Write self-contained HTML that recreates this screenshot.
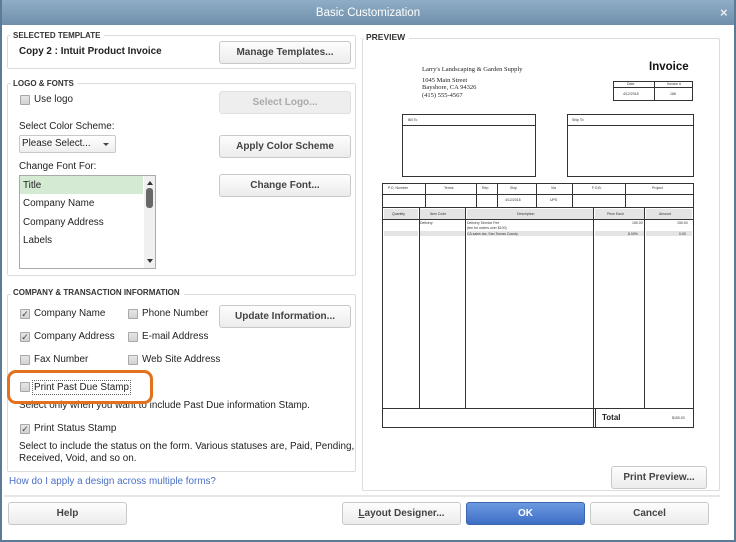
<!DOCTYPE html>
<html><head><style>
*{box-sizing:border-box;margin:0;padding:0}
body{width:736px;height:542px;overflow:hidden;background:#fff;font-family:"Liberation Sans",Arial,sans-serif;font-size:10px;color:#222;position:relative}
.a{position:absolute}
.win{left:0;top:0;width:736px;height:542px;border:2px solid #5d7b96;border-top:none}
.title{left:0;top:0;width:736px;height:25px;background:linear-gradient(#90adc6,#6f8fab);color:#fff;font-size:11.5px;text-align:center;line-height:26px}
.grp{border:1px solid #dcdcdc;border-radius:2px}
.lg{font-size:8px;font-weight:bold;color:#333;background:#fff;padding:0 4px 0 2px}
.btn{border:1px solid #c8c8c8;border-radius:3px;background:linear-gradient(#fdfdfd,#ececec);text-align:center;font-weight:bold;color:#444;font-size:10px}
.cb{width:10px;height:10px;border:1px solid #a8a8a8;background:linear-gradient(#e6e6e6,#d2d2d2);border-radius:1px;font-size:9px;line-height:8px;text-align:center;color:#444}
.t{font-size:9.9px;color:#222;white-space:nowrap}
.ln{background:#333}
.tx{font-size:3.5px;color:#333;white-space:nowrap}
.gr{background:#e4e4e4}
</style></head><body>
<div class="a title">Basic Customization</div>
<div class="a" style="left:720px;top:5px;color:#e8eef4;font-size:13px;font-weight:bold">×</div>
<div class="a win"></div>

<div class="a grp" style="left:7px;top:35px;width:349px;height:34px"></div>
<div class="a lg" style="left:11px;top:31px">SELECTED TEMPLATE</div>
<div class="a t" style="left:19px;top:46px;font-weight:bold">Copy 2 : Intuit Product Invoice</div>
<div class="a btn" style="left:219px;top:41px;width:132px;height:23px;line-height:21px">Manage Templates...</div>

<div class="a grp" style="left:7px;top:83px;width:349px;height:193px"></div>
<div class="a lg" style="left:11px;top:79px">LOGO &amp; FONTS</div>
<div class="a cb" style="left:20px;top:95px"></div>
<div class="a t" style="left:34px;top:94px">Use logo</div>
<div class="a btn" style="left:219px;top:91px;width:132px;height:23px;line-height:21px;color:#aaa;background:#eee;border-color:#e0e0e0">Select Logo...</div>
<div class="a t" style="left:19px;top:121px">Select Color Scheme:</div>
<div class="a" style="left:19px;top:135px;width:97px;height:18px;border:1px solid #c8c8c8;border-radius:2px;background:linear-gradient(#fff,#eee)"></div>
<div class="a t" style="left:22px;top:138px">Please Select...</div>
<div class="a" style="left:103px;top:143px;border-left:3px solid transparent;border-right:3px solid transparent;border-top:3px solid #444"></div>
<div class="a btn" style="left:219px;top:135px;width:132px;height:23px;line-height:21px">Apply Color Scheme</div>
<div class="a t" style="left:19px;top:161px">Change Font For:</div>
<div class="a" style="left:19px;top:175px;width:137px;height:94px;border:1px solid #aaa"></div>
<div class="a" style="left:20px;top:176px;width:123px;height:18px;background:#d5ead3"></div>
<div class="a t" style="left:23px;top:180px">Title</div>
<div class="a t" style="left:23px;top:198px">Company Name</div>
<div class="a t" style="left:23px;top:217px">Company Address</div>
<div class="a t" style="left:23px;top:235px">Labels</div>
<div class="a" style="left:144px;top:176px;width:11px;height:92px;background:#f0f0f0"></div>
<div class="a" style="left:147px;top:181px;border-left:3px solid transparent;border-right:3px solid transparent;border-bottom:4px solid #333"></div>
<div class="a" style="left:146px;top:188px;width:7px;height:20px;background:#686868;border-radius:3px"></div>
<div class="a" style="left:147px;top:259px;border-left:3px solid transparent;border-right:3px solid transparent;border-top:4px solid #333"></div>
<div class="a btn" style="left:219px;top:174px;width:132px;height:23px;line-height:21px">Change Font...</div>

<div class="a grp" style="left:7px;top:294px;width:349px;height:178px"></div>
<div class="a lg" style="left:11px;top:288px">COMPANY &amp; TRANSACTION INFORMATION</div>
<div class="a cb" style="left:20px;top:309px">✓</div><div class="a t" style="left:34px;top:308px">Company Name</div>
<div class="a cb" style="left:128px;top:309px"></div><div class="a t" style="left:142px;top:308px">Phone Number</div>
<div class="a btn" style="left:219px;top:305px;width:132px;height:23px;line-height:21px">Update Information...</div>
<div class="a cb" style="left:20px;top:332px">✓</div><div class="a t" style="left:34px;top:331px">Company Address</div>
<div class="a cb" style="left:128px;top:332px"></div><div class="a t" style="left:142px;top:331px">E-mail Address</div>
<div class="a cb" style="left:20px;top:355px"></div><div class="a t" style="left:34px;top:354px">Fax Number</div>
<div class="a cb" style="left:128px;top:355px"></div><div class="a t" style="left:142px;top:354px">Web Site Address</div>
<div class="a cb" style="left:20px;top:382px"></div>
<div class="a t" style="left:32px;top:380px;border:1px dotted #666;padding:1px 1px">Print Past Due Stamp</div>
<div class="a t" style="left:19px;top:400px">Select only when you want to include Past Due information Stamp.</div>
<div class="a" style="left:7px;top:370px;width:146px;height:34px;border:3px solid #e2701c;border-radius:9px"></div>
<div class="a cb" style="left:20px;top:424px">✓</div><div class="a t" style="left:34px;top:423px">Print Status Stamp</div>
<div class="a t" style="left:19px;top:441px">Select to include the status on the form. Various statuses are, Paid, Pending,</div>
<div class="a t" style="left:19px;top:453px">Received, Void, and so on.</div>
<div class="a t" style="left:9px;top:476px;color:#4a6fc7">How do I apply a design across multiple forms?</div>

<div class="a grp" style="left:362px;top:38px;width:358px;height:453px"></div>
<div class="a lg" style="left:364px;top:32px;font-size:8.5px">PREVIEW</div>
<div class="a" style="left:422px;top:66px;font-family:'Liberation Serif',serif;font-size:6.5px;color:#222;line-height:7.5px">Larry's Landscaping &amp; Garden Supply<div style="height:3px"></div>1045 Main Street<br>Bayshore, CA 94326<br>(415) 555-4567</div>
<div class="a" style="left:649px;top:61px;font-size:11.5px;font-weight:bold;color:#111">Invoice</div>
<div class="a" style="left:613px;top:81px;width:80px;height:20px;border:1px solid #333"></div>
<div class="a ln" style="left:613px;top:87px;width:80px;height:1px"></div>
<div class="a ln" style="left:654px;top:81px;width:1px;height:20px"></div>
<div class="a tx" style="left:627px;top:82px">Date</div><div class="a tx" style="left:667px;top:82px">Invoice #</div>
<div class="a tx" style="left:623px;top:92px">4/12/2018</div><div class="a tx" style="left:670px;top:92px">166</div>
<div class="a" style="left:402px;top:114px;width:134px;height:63px;border:1px solid #333"></div>
<div class="a ln" style="left:402px;top:125px;width:134px;height:1px"></div>
<div class="a tx" style="left:408px;top:118px">Bill To</div>
<div class="a" style="left:567px;top:114px;width:127px;height:63px;border:1px solid #333"></div>
<div class="a ln" style="left:567px;top:125px;width:127px;height:1px"></div>
<div class="a tx" style="left:572px;top:118px">Ship To</div>

<div class="a" style="left:382px;top:183px;width:312px;height:245px;border:1px solid #333"></div>
<div class="a ln" style="left:382px;top:194px;width:312px;height:1px"></div>
<div class="a ln" style="left:382px;top:207px;width:312px;height:1px"></div>
<div class="a ln" style="left:425px;top:183px;width:1px;height:24px"></div>
<div class="a ln" style="left:476px;top:183px;width:1px;height:24px"></div>
<div class="a ln" style="left:497px;top:183px;width:1px;height:24px"></div>
<div class="a ln" style="left:536px;top:183px;width:1px;height:24px"></div>
<div class="a ln" style="left:572px;top:183px;width:1px;height:24px"></div>
<div class="a ln" style="left:625px;top:183px;width:1px;height:24px"></div>
<div class="a tx" style="left:388px;top:186px">P.O. Number</div><div class="a tx" style="left:444px;top:186px">Terms</div><div class="a tx" style="left:482px;top:186px">Rep</div><div class="a tx" style="left:510px;top:186px">Ship</div><div class="a tx" style="left:551px;top:186px">Via</div><div class="a tx" style="left:592px;top:186px">F.O.B.</div><div class="a tx" style="left:652px;top:186px">Project</div>
<div class="a tx" style="left:505px;top:198px">4/12/2018</div><div class="a tx" style="left:550px;top:198px">UPS</div>
<div class="a gr" style="left:384px;top:209px;width:34px;height:10px"></div>
<div class="a gr" style="left:420px;top:209px;width:45px;height:10px"></div>
<div class="a gr" style="left:467px;top:209px;width:126px;height:10px"></div>
<div class="a gr" style="left:595px;top:209px;width:49px;height:10px"></div>
<div class="a gr" style="left:646px;top:209px;width:46px;height:10px"></div>
<div class="a gr" style="left:384px;top:231px;width:34px;height:5px"></div>
<div class="a gr" style="left:420px;top:231px;width:45px;height:5px"></div>
<div class="a gr" style="left:467px;top:231px;width:126px;height:5px"></div>
<div class="a gr" style="left:595px;top:231px;width:49px;height:5px"></div>
<div class="a gr" style="left:646px;top:231px;width:46px;height:5px"></div>
<div class="a ln" style="left:382px;top:219px;width:312px;height:1px"></div>
<div class="a ln" style="left:419px;top:207px;width:1px;height:201px"></div>
<div class="a ln" style="left:465px;top:207px;width:1px;height:201px"></div>
<div class="a ln" style="left:593px;top:207px;width:1px;height:221px"></div>
<div class="a ln" style="left:644px;top:207px;width:1px;height:201px"></div>
<div class="a ln" style="left:382px;top:408px;width:312px;height:1px"></div>
<div class="a ln" style="left:595px;top:408px;width:1px;height:20px"></div>
<div class="a tx" style="left:392px;top:212px">Quantity</div><div class="a tx" style="left:430px;top:212px">Item Code</div><div class="a tx" style="left:517px;top:212px">Description</div><div class="a tx" style="left:607px;top:212px">Price Each</div><div class="a tx" style="left:659px;top:212px">Amount</div>
<div class="a tx" style="left:420px;top:221px">Delivery</div><div class="a tx" style="left:467px;top:221px">Delivery Service Fee</div><div class="a tx" style="left:632px;top:221px">150.00</div><div class="a tx" style="left:677px;top:221px">150.00</div>
<div class="a tx" style="left:467px;top:226px">(fee for orders over $100)</div>
<div class="a tx" style="left:467px;top:232px">CA sales tax, San Tomas County</div><div class="a tx" style="left:628px;top:232px">8.00%</div><div class="a tx" style="left:679px;top:232px">0.00</div>
<div class="a" style="left:602px;top:413px;font-size:8px;font-weight:bold;color:#222">Total</div>
<div class="a tx" style="left:672px;top:416px">$150.00</div>

<div class="a btn" style="left:611px;top:466px;width:96px;height:23px;line-height:21px">Print Preview...</div>

<div class="a" style="left:4px;top:495px;width:716px;height:2px;background:#e6e6e6"></div>
<div class="a btn" style="left:8px;top:502px;width:119px;height:23px;line-height:21px">Help</div>
<div class="a btn" style="left:342px;top:502px;width:119px;height:23px;line-height:21px"><u>L</u>ayout Designer...</div>
<div class="a btn" style="left:466px;top:502px;width:119px;height:23px;line-height:21px;background:linear-gradient(#6b9ae0,#3f6fc6);color:#fff;border-color:#3d66b0">OK</div>
<div class="a btn" style="left:590px;top:502px;width:119px;height:23px;line-height:21px">Cancel</div>
</body></html>
